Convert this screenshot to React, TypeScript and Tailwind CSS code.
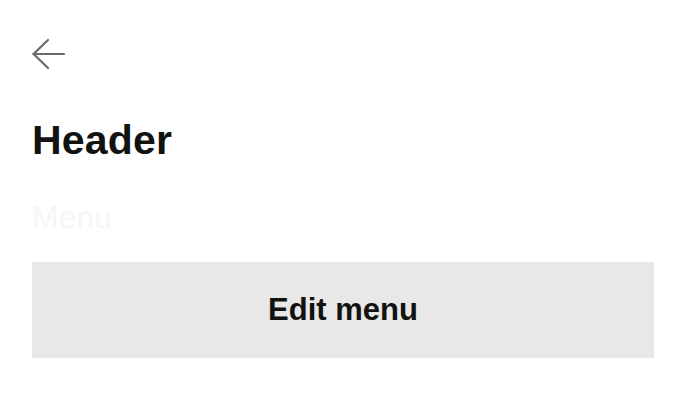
export default function App() {
  return (
    <div className="min-h-[400px] w-[690px] bg-white pl-8 pr-9 pt-[38px] font-['Liberation_Sans',Arial,sans-serif]">
      <button className="block text-[#6a6a67]" aria-label="Back">
        <svg width="33" height="32" viewBox="0 0 33 32" fill="none" stroke="currentColor" strokeWidth="2.2" strokeLinecap="round" strokeLinejoin="round" className="overflow-visible">
          <path d="M1.5 16H32" />
          <path d="M16 2L1.5 16L16 30" />
        </svg>
      </button>

      <h1 className="mt-[50px] text-[41px] font-bold leading-[40px] tracking-[0.2px] text-[#121210]">Header</h1>

      <div className="mt-[41px] text-[32px] leading-[32px] text-[#f7f6f3]">Menu</div>

      <button className="mt-[29px] flex h-[96px] w-full items-center justify-center bg-[#e8e8e6] text-[31px] font-bold text-[#121210]">
        Edit menu
      </button>
    </div>
  );
}
